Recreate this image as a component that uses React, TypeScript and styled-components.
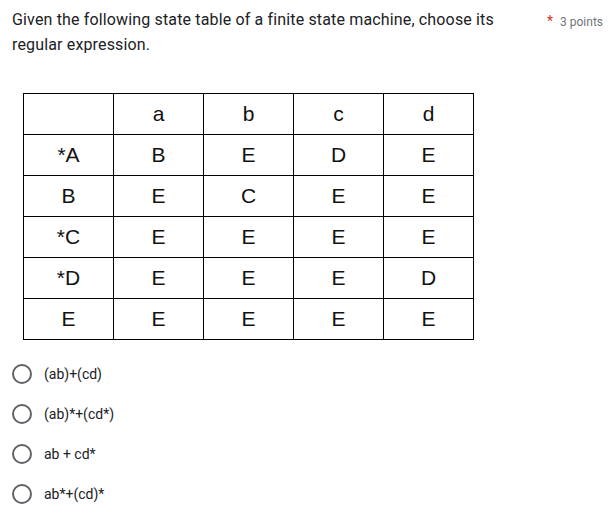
import React from 'react';
import styled, { createGlobalStyle } from 'styled-components';

const GlobalStyle = createGlobalStyle`
  html, body {
    margin: 0;
    padding: 0;
    background: #ffffff;
  }
  body {
    font-family: Roboto, Arial, sans-serif;
    color: #202124;
  }
`;

const Page = styled.div`
  width: 616px;
  height: 529px;
  box-sizing: border-box;
  padding: 7px 12px 0 12px;
`;

const Header = styled.div`
  display: flex;
  align-items: flex-start;
`;

const Question = styled.div`
  flex: 1;
  font-size: 16px;
  line-height: 25px;
  letter-spacing: 0.15px;
  color: #202124;
  padding-right: 40px;
`;

const Points = styled.div`
  font-size: 12px;
  color: #70757a;
  white-space: nowrap;
  padding-top: 6px;
  margin-right: 1px;
`;

const Required = styled.span`
  color: #d93025;
  font-size: 14px;
  margin-right: 7px;
`;

const StateTable = styled.table`
  margin: 36px 0 0 11px;
  border-collapse: collapse;
`;

const Cell = styled.td`
  width: 89px;
  height: 40px;
  border: 1px solid #000000;
  text-align: center;
  vertical-align: middle;
  padding: 0;
  font-family: 'Liberation Sans', Arial, sans-serif;
  font-size: 21px;
  font-weight: normal;
  color: #111111;
`;

const Options = styled.div`
  display: flex;
  flex-direction: column;
  gap: 19px;
  margin-top: 23px;
`;

const Option = styled.label`
  display: flex;
  align-items: center;
  gap: 12px;
  height: 21px;
  font-size: 14px;
  color: #202124;
`;

const Radio = styled.span`
  width: 16px;
  height: 16px;
  border: 2px solid #5f6368;
  border-radius: 50%;
  flex-shrink: 0;
`;

const header = ['', 'a', 'b', 'c', 'd'];

const rows = [
  ['*A', 'B', 'E', 'D', 'E'],
  ['B', 'E', 'C', 'E', 'E'],
  ['*C', 'E', 'E', 'E', 'E'],
  ['*D', 'E', 'E', 'E', 'D'],
  ['E', 'E', 'E', 'E', 'E'],
];

const choices = ['(ab)+(cd)', '(ab)*+(cd*)', 'ab + cd*', 'ab*+(cd)*'];

export default function App() {
  return (
    <>
      <GlobalStyle />
      <Page>
        <Header>
          <Question>
            Given the following state table of a finite state machine, choose its regular
            expression.
          </Question>
          <Points>
            <Required>*</Required>3 points
          </Points>
        </Header>

        <StateTable>
          <tbody>
            <tr>
              {header.map((h, i) => (
                <Cell key={i}>{h}</Cell>
              ))}
            </tr>
            {rows.map((row, r) => (
              <tr key={r}>
                {row.map((v, c) => (
                  <Cell key={c}>{v}</Cell>
                ))}
              </tr>
            ))}
          </tbody>
        </StateTable>

        <Options>
          {choices.map((c) => (
            <Option key={c}>
              <Radio />
              {c}
            </Option>
          ))}
        </Options>
      </Page>
    </>
  );
}
